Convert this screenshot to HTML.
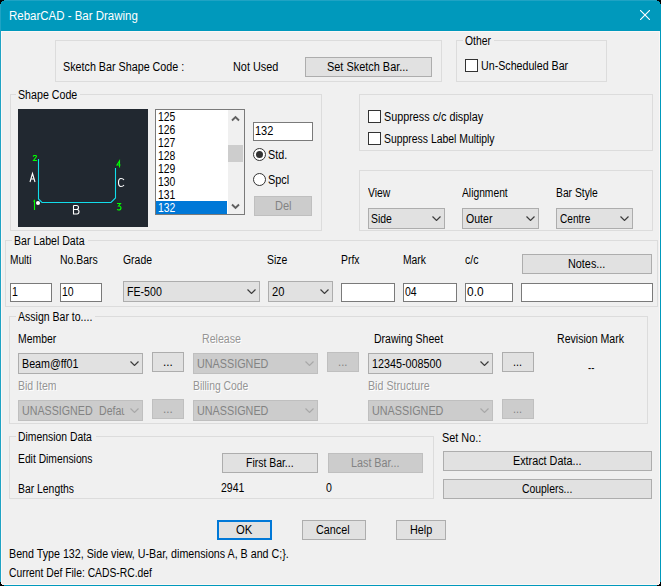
<!DOCTYPE html><html><head><meta charset="utf-8"><style>
html,body{margin:0;padding:0;width:661px;height:586px;overflow:hidden;background:#f0f0f0}
body{position:relative;font-family:"Liberation Sans",sans-serif}
.t{position:absolute;line-height:12px;white-space:pre;transform-origin:0 50%}
</style></head><body>
<div style="position:absolute;left:0px;top:0px;width:661px;height:586px;background:#000;"></div>
<div style="position:absolute;left:0px;top:0px;width:661px;height:586px;background:#0099bc;border-top:1px solid #1fa3c4;border-left:1px solid #1fa3c4;box-sizing:border-box;"></div>
<div style="position:absolute;left:1px;top:31px;width:659px;height:554px;background:#fcf7f6;"></div>
<div style="position:absolute;left:2px;top:32px;width:657px;height:552px;background:#f0f0f0;"></div>
<div style="position:absolute;left:0px;top:0px;width:4px;height:1px;background:#000;"></div>
<div style="position:absolute;left:0px;top:1px;width:2px;height:1px;background:#000;"></div>
<div style="position:absolute;left:0px;top:2px;width:1px;height:2px;background:#000;"></div>
<div style="position:absolute;left:657px;top:0px;width:4px;height:1px;background:#000;"></div>
<div style="position:absolute;left:659px;top:1px;width:2px;height:1px;background:#000;"></div>
<div style="position:absolute;left:660px;top:2px;width:1px;height:2px;background:#000;"></div>
<div style="position:absolute;left:0px;top:585px;width:4px;height:1px;background:#000;"></div>
<div style="position:absolute;left:0px;top:584px;width:2px;height:1px;background:#000;"></div>
<div style="position:absolute;left:0px;top:582px;width:1px;height:2px;background:#000;"></div>
<div style="position:absolute;left:657px;top:585px;width:4px;height:1px;background:#000;"></div>
<div style="position:absolute;left:659px;top:584px;width:2px;height:1px;background:#000;"></div>
<div style="position:absolute;left:660px;top:582px;width:1px;height:2px;background:#000;"></div>
<div class="t" style="left:9.34px;top:10px;color:#fff;font-size:12px;transform:scaleX(0.9564)">RebarCAD - Bar Drawing</div>
<svg style="position:absolute;left:640px;top:10px" width="10" height="10" viewBox="0 0 10 10"><path d="M0,0 L10,10 M10,0 L0,10" stroke="#fff" stroke-width="1.1"/></svg>
<div style="position:absolute;left:55px;top:40px;width:387px;height:42px;background:transparent;border:1px solid #dcdcdc;box-sizing:border-box;"></div>
<div class="t" style="left:63.40px;top:61px;color:#000;font-size:12px;transform:scaleX(0.8955)">Sketch Bar Shape Code :</div>
<div class="t" style="left:233.39px;top:61px;color:#000;font-size:12px;transform:scaleX(0.9083)">Not Used</div>
<div style="position:absolute;left:305px;top:57px;width:127px;height:20px;background:#e1e1e1;border:1px solid #adadad;box-sizing:border-box;"></div>
<div class="t" style="left:327.29px;top:61px;color:#000;font-size:12px;transform:scaleX(0.9102)">Set Sketch Bar...</div>
<div style="position:absolute;left:456px;top:40px;width:151px;height:42px;background:transparent;border:1px solid #dcdcdc;box-sizing:border-box;"></div>
<div style="position:absolute;left:463px;top:40px;width:31px;height:1px;background:#f0f0f0;"></div>
<div class="t" style="left:464.70px;top:35px;color:#000;font-size:12px;transform:scaleX(0.8633)">Other</div>
<div style="position:absolute;left:465px;top:59px;width:13px;height:13px;background:#fff;border:1px solid #333;box-sizing:border-box;"></div>
<div class="t" style="left:480.91px;top:60px;color:#000;font-size:12px;transform:scaleX(0.8887)">Un-Scheduled Bar</div>
<div style="position:absolute;left:10px;top:94px;width:312px;height:137px;background:transparent;border:1px solid #dcdcdc;box-sizing:border-box;"></div>
<div style="position:absolute;left:16px;top:94px;width:64px;height:1px;background:#f0f0f0;"></div>
<div class="t" style="left:17.71px;top:89px;color:#000;font-size:12px;transform:scaleX(0.8877)">Shape Code</div>
<svg style="position:absolute;left:18px;top:109px" width="130" height="118" viewBox="0 0 130 118">
<rect x="0" y="0" width="130" height="118" fill="#212830"/>
<path d="M20.5,50 L20.5,90 L24,93.5 L93,93.5 L97.5,89 L97.5,59" fill="none" stroke="#12dcea" stroke-width="1.1"/>
<g fill="none" stroke="#00ff00" stroke-width="1.1">
<path d="M15,47.5 L16,46.5 L18,46.5 L18.5,47.5 L15.5,51.5 L19,51.5"/>
<path d="M15.5,92.5 L16.5,91.5 L16.5,101"/>
<path d="M101.5,58.5 L101.5,52 L99,56 L102.5,56"/>
<path d="M99,94.5 L102.5,94.5 L100.5,97 Q103,97 103,99 Q103,101 100.5,101 L99,100.5"/>
</g>
<g fill="none" stroke="#ffffff" stroke-width="1.1">
<path d="M12,73 L14.5,64.5 L17,73 M13,70 L16,70"/>
<path d="M106,71 Q105,69.5 103,69.5 Q100.5,69.5 100.5,73.5 Q100.5,77.5 103,77.5 Q105,77.5 106,76"/>
<path d="M55.5,96.5 L55.5,105 L59,105 Q61,105 61,102.5 Q61,100.5 58.5,100.5 L55.5,100.5 M58.5,100.5 Q60.5,100.5 60.5,98.5 Q60.5,96.5 58.5,96.5 L55.5,96.5"/>
</g>
<circle cx="20" cy="94" r="2" fill="#fff"/>
</svg>
<div style="position:absolute;left:155px;top:109px;width:90px;height:106px;background:#fff;border:1px solid #7a7a7a;box-sizing:border-box;"></div>
<div style="position:absolute;left:228px;top:110px;width:16px;height:104px;background:#f0f0f0;"></div>
<div style="position:absolute;left:228px;top:145px;width:15px;height:17px;background:#cdcdcd;"></div>
<svg style="position:absolute;left:231px;top:115px" width="9" height="7" viewBox="0 0 9 7"><polyline points="1,5.5 4.5,2 8,5.5" fill="none" stroke="#606060" stroke-width="1.9"/></svg>
<svg style="position:absolute;left:231px;top:203px" width="9" height="7" viewBox="0 0 9 7"><polyline points="1,1.5 4.5,5 8,1.5" fill="none" stroke="#606060" stroke-width="1.9"/></svg>
<div style="position:absolute;left:156px;top:201px;width:71px;height:13px;background:#0078d7;"></div>
<div class="t" style="left:158.14px;top:111px;color:#000;font-size:12px;transform:scaleX(0.8632)">125</div>
<div class="t" style="left:158.14px;top:124px;color:#000;font-size:12px;transform:scaleX(0.8632)">126</div>
<div class="t" style="left:158.14px;top:137px;color:#000;font-size:12px;transform:scaleX(0.8632)">127</div>
<div class="t" style="left:158.14px;top:150px;color:#000;font-size:12px;transform:scaleX(0.8632)">128</div>
<div class="t" style="left:158.14px;top:163px;color:#000;font-size:12px;transform:scaleX(0.8632)">129</div>
<div class="t" style="left:158.14px;top:176px;color:#000;font-size:12px;transform:scaleX(0.8632)">130</div>
<div class="t" style="left:158.14px;top:189px;color:#000;font-size:12px;transform:scaleX(0.8632)">131</div>
<div class="t" style="left:158.14px;top:202px;color:#fff;font-size:12px;transform:scaleX(0.8632)">132</div>
<div style="position:absolute;left:253px;top:122px;width:60px;height:19px;background:#fff;border:1px solid #7a7a7a;box-sizing:border-box;"></div>
<div class="t" style="left:254.68px;top:125px;color:#000;font-size:12px;transform:scaleX(0.9158)">132</div>
<svg style="position:absolute;left:253px;top:148px" width="13" height="13" viewBox="0 0 13 13"><circle cx="6.5" cy="6.5" r="6" fill="#fff" stroke="#333" stroke-width="1"/><circle cx="6.5" cy="6.5" r="3.5" fill="#333"/></svg>
<div class="t" style="left:268.30px;top:149px;color:#000;font-size:12px;transform:scaleX(0.9000)">Std.</div>
<svg style="position:absolute;left:253px;top:173px" width="13" height="13" viewBox="0 0 13 13"><circle cx="6.5" cy="6.5" r="6" fill="#fff" stroke="#333" stroke-width="1"/></svg>
<div class="t" style="left:268.29px;top:174px;color:#000;font-size:12px;transform:scaleX(0.9091)">Spcl</div>
<div style="position:absolute;left:254px;top:196px;width:58px;height:20px;background:#cccccc;border:1px solid #bfbfbf;box-sizing:border-box;"></div>
<div class="t" style="left:274.78px;top:200px;color:#838383;font-size:12px;transform:scaleX(0.9187)">Del</div>
<div style="position:absolute;left:359px;top:94px;width:294px;height:57px;background:transparent;border:1px solid #dcdcdc;box-sizing:border-box;"></div>
<div style="position:absolute;left:368px;top:110px;width:13px;height:13px;background:#fff;border:1px solid #333;box-sizing:border-box;"></div>
<div class="t" style="left:383.60px;top:111px;color:#000;font-size:12px;transform:scaleX(0.9000)">Suppress c/c display</div>
<div style="position:absolute;left:368px;top:132px;width:13px;height:13px;background:#fff;border:1px solid #333;box-sizing:border-box;"></div>
<div class="t" style="left:383.63px;top:133px;color:#000;font-size:12px;transform:scaleX(0.8677)">Suppress Label Multiply</div>
<div style="position:absolute;left:359px;top:170px;width:294px;height:61px;background:transparent;border:1px solid #dcdcdc;box-sizing:border-box;"></div>
<div class="t" style="left:368.00px;top:187px;color:#000;font-size:12px;transform:scaleX(0.8654)">View</div>
<div class="t" style="left:461.80px;top:187px;color:#000;font-size:12px;transform:scaleX(0.8566)">Alignment</div>
<div class="t" style="left:555.94px;top:187px;color:#000;font-size:12px;transform:scaleX(0.8596)">Bar Style</div>
<div style="position:absolute;left:368px;top:208px;width:77px;height:21px;background:#e1e1e1;border:1px solid #adadad;box-sizing:border-box;"></div>
<div class="t" style="left:371.13px;top:213px;color:#000;font-size:12px;transform:scaleX(0.8696)">Side</div>
<svg style="position:absolute;left:432px;top:216px" width="9" height="5" viewBox="0 0 9 5"><polyline points="0.5,0.5 4.5,4.5 8.5,0.5" fill="none" stroke="#3c3c3c" stroke-width="1.15"/></svg>
<div style="position:absolute;left:462px;top:208px;width:77px;height:21px;background:#e1e1e1;border:1px solid #adadad;box-sizing:border-box;"></div>
<div class="t" style="left:466.00px;top:213px;color:#000;font-size:12px;transform:scaleX(0.8800)">Outer</div>
<svg style="position:absolute;left:526px;top:216px" width="9" height="5" viewBox="0 0 9 5"><polyline points="0.5,0.5 4.5,4.5 8.5,0.5" fill="none" stroke="#3c3c3c" stroke-width="1.15"/></svg>
<div style="position:absolute;left:556px;top:208px;width:77px;height:21px;background:#e1e1e1;border:1px solid #adadad;box-sizing:border-box;"></div>
<div class="t" style="left:559.60px;top:213px;color:#000;font-size:12px;transform:scaleX(0.8417)">Centre</div>
<svg style="position:absolute;left:620px;top:216px" width="9" height="5" viewBox="0 0 9 5"><polyline points="0.5,0.5 4.5,4.5 8.5,0.5" fill="none" stroke="#3c3c3c" stroke-width="1.15"/></svg>
<div style="position:absolute;left:5px;top:240px;width:653px;height:67px;background:transparent;border:1px solid #dcdcdc;box-sizing:border-box;"></div>
<div style="position:absolute;left:12px;top:240px;width:76px;height:1px;background:#f0f0f0;"></div>
<div class="t" style="left:13.62px;top:235px;color:#000;font-size:12px;transform:scaleX(0.8810)">Bar Label Data</div>
<div class="t" style="left:10.05px;top:254px;color:#000;font-size:12px;transform:scaleX(0.8458)">Multi</div>
<div class="t" style="left:59.63px;top:254px;color:#000;font-size:12px;transform:scaleX(0.8714)">No.Bars</div>
<div class="t" style="left:122.50px;top:254px;color:#000;font-size:12px;transform:scaleX(0.8697)">Grade</div>
<div class="t" style="left:267.13px;top:254px;color:#000;font-size:12px;transform:scaleX(0.8682)">Size</div>
<div class="t" style="left:340.63px;top:254px;color:#000;font-size:12px;transform:scaleX(0.8650)">Prfx</div>
<div class="t" style="left:402.54px;top:254px;color:#000;font-size:12px;transform:scaleX(0.8615)">Mark</div>
<div class="t" style="left:464.80px;top:254px;color:#000;font-size:12px;transform:scaleX(0.8800)">c/c</div>
<div style="position:absolute;left:10px;top:283px;width:42px;height:19px;background:#fff;border:1px solid #7a7a7a;box-sizing:border-box;"></div>
<div class="t" style="left:11.82px;top:286px;color:#000;font-size:12px;transform:scaleX(0.8800)">1</div>
<div style="position:absolute;left:60px;top:283px;width:42px;height:19px;background:#fff;border:1px solid #7a7a7a;box-sizing:border-box;"></div>
<div class="t" style="left:62.12px;top:286px;color:#000;font-size:12px;transform:scaleX(0.8750)">10</div>
<div style="position:absolute;left:123px;top:281px;width:137px;height:21px;background:#e1e1e1;border:1px solid #adadad;box-sizing:border-box;"></div>
<div class="t" style="left:126.62px;top:286px;color:#000;font-size:12px;transform:scaleX(0.8842)">FE-500</div>
<svg style="position:absolute;left:247px;top:289px" width="9" height="5" viewBox="0 0 9 5"><polyline points="0.5,0.5 4.5,4.5 8.5,0.5" fill="none" stroke="#3c3c3c" stroke-width="1.15"/></svg>
<div style="position:absolute;left:268px;top:281px;width:65px;height:21px;background:#e1e1e1;border:1px solid #adadad;box-sizing:border-box;"></div>
<div class="t" style="left:272.10px;top:286px;color:#000;font-size:12px;transform:scaleX(0.9308)">20</div>
<svg style="position:absolute;left:320px;top:289px" width="9" height="5" viewBox="0 0 9 5"><polyline points="0.5,0.5 4.5,4.5 8.5,0.5" fill="none" stroke="#3c3c3c" stroke-width="1.15"/></svg>
<div style="position:absolute;left:341px;top:283px;width:54px;height:19px;background:#fff;border:1px solid #7a7a7a;box-sizing:border-box;"></div>
<div style="position:absolute;left:403px;top:283px;width:54px;height:19px;background:#fff;border:1px solid #7a7a7a;box-sizing:border-box;"></div>
<div class="t" style="left:405.40px;top:286px;color:#000;font-size:12px;transform:scaleX(0.8769)">04</div>
<div style="position:absolute;left:465px;top:283px;width:48px;height:19px;background:#fff;border:1px solid #7a7a7a;box-sizing:border-box;"></div>
<div class="t" style="left:466.50px;top:286px;color:#000;font-size:12px;transform:scaleX(0.9937)">0.0</div>
<div style="position:absolute;left:521px;top:283px;width:132px;height:19px;background:#fff;border:1px solid #7a7a7a;box-sizing:border-box;"></div>
<div style="position:absolute;left:522px;top:254px;width:130px;height:20px;background:#e1e1e1;border:1px solid #adadad;box-sizing:border-box;"></div>
<div class="t" style="left:567.50px;top:258px;color:#000;font-size:12px;transform:scaleX(0.9025)">Notes...</div>
<div style="position:absolute;left:9px;top:316px;width:639px;height:108px;background:transparent;border:1px solid #dcdcdc;box-sizing:border-box;"></div>
<div style="position:absolute;left:16px;top:316px;width:79px;height:1px;background:#f0f0f0;"></div>
<div class="t" style="left:18.00px;top:311px;color:#000;font-size:12px;transform:scaleX(0.8774)">Assign Bar to....</div>
<div class="t" style="left:17.63px;top:333px;color:#000;font-size:12px;transform:scaleX(0.8674)">Member</div>
<div class="t" style="left:202.81px;top:334px;color:#fff;font-size:12px;transform:scaleX(0.8860)">Release</div>
<div class="t" style="left:201.81px;top:333px;color:#959595;font-size:12px;transform:scaleX(0.8860)">Release</div>
<div class="t" style="left:373.62px;top:333px;color:#000;font-size:12px;transform:scaleX(0.8782)">Drawing Sheet</div>
<div class="t" style="left:556.92px;top:333px;color:#000;font-size:12px;transform:scaleX(0.8813)">Revision Mark</div>
<div style="position:absolute;left:18px;top:353px;width:125px;height:21px;background:#e1e1e1;border:1px solid #adadad;box-sizing:border-box;"></div>
<div class="t" style="left:21.51px;top:358px;color:#000;font-size:12px;transform:scaleX(0.8903)">Beam@ff01</div>
<svg style="position:absolute;left:130px;top:361px" width="9" height="5" viewBox="0 0 9 5"><polyline points="0.5,0.5 4.5,4.5 8.5,0.5" fill="none" stroke="#3c3c3c" stroke-width="1.15"/></svg>
<div style="position:absolute;left:152px;top:352px;width:32px;height:20px;background:#e1e1e1;border:1px solid #adadad;box-sizing:border-box;"></div>
<div class="t" style="left:162.83px;top:356px;color:#000;font-size:12px;transform:scaleX(0.9750)">...</div>
<div style="position:absolute;left:193px;top:353px;width:125px;height:21px;background:#cccccc;border:1px solid #bfbfbf;box-sizing:border-box;"></div>
<div class="t" style="left:196.60px;top:358px;color:#838383;font-size:12px;transform:scaleX(0.9000)">UNASSIGNED</div>
<svg style="position:absolute;left:305px;top:361px" width="9" height="5" viewBox="0 0 9 5"><polyline points="0.5,0.5 4.5,4.5 8.5,0.5" fill="none" stroke="#a8a8a8" stroke-width="1.15"/></svg>
<div style="position:absolute;left:327px;top:352px;width:32px;height:20px;background:#cccccc;border:1px solid #bfbfbf;box-sizing:border-box;"></div>
<div class="t" style="left:337.56px;top:356px;color:#838383;font-size:12px;transform:scaleX(0.9375)">...</div>
<div style="position:absolute;left:368px;top:353px;width:125px;height:21px;background:#e1e1e1;border:1px solid #adadad;box-sizing:border-box;"></div>
<div class="t" style="left:371.90px;top:358px;color:#000;font-size:12px;transform:scaleX(0.8974)">12345-008500</div>
<svg style="position:absolute;left:480px;top:361px" width="9" height="5" viewBox="0 0 9 5"><polyline points="0.5,0.5 4.5,4.5 8.5,0.5" fill="none" stroke="#3c3c3c" stroke-width="1.15"/></svg>
<div style="position:absolute;left:502px;top:352px;width:32px;height:20px;background:#e1e1e1;border:1px solid #adadad;box-sizing:border-box;"></div>
<div class="t" style="left:513.00px;top:356px;color:#000;font-size:12px;transform:scaleX(0.9000)">...</div>
<div class="t" style="left:587.90px;top:362px;color:#000;font-size:12px;transform:scaleX(0.7875)">--</div>
<div class="t" style="left:18.63px;top:381px;color:#fff;font-size:12px;transform:scaleX(0.8744)">Bid Item</div>
<div class="t" style="left:17.63px;top:380px;color:#959595;font-size:12px;transform:scaleX(0.8744)">Bid Item</div>
<div class="t" style="left:193.73px;top:381px;color:#fff;font-size:12px;transform:scaleX(0.8651)">Billing Code</div>
<div class="t" style="left:192.73px;top:380px;color:#959595;font-size:12px;transform:scaleX(0.8651)">Billing Code</div>
<div class="t" style="left:368.61px;top:381px;color:#fff;font-size:12px;transform:scaleX(0.8897)">Bid Structure</div>
<div class="t" style="left:367.61px;top:380px;color:#959595;font-size:12px;transform:scaleX(0.8897)">Bid Structure</div>
<div style="position:absolute;left:18px;top:400px;width:125px;height:21px;background:#cccccc;border:1px solid #bfbfbf;box-sizing:border-box;"></div>
<div class="t" style="left:21.51px;top:405px;color:#838383;font-size:12px;transform:scaleX(0.8910)">UNASSIGNED</div>
<svg style="position:absolute;left:130px;top:408px" width="9" height="5" viewBox="0 0 9 5"><polyline points="0.5,0.5 4.5,4.5 8.5,0.5" fill="none" stroke="#a8a8a8" stroke-width="1.15"/></svg>
<div class="t" style="left:98.82px;top:405px;color:#838383;font-size:12px;transform:scaleX(0.8800);width:28.6px;overflow:hidden">Default</div>
<div style="position:absolute;left:152px;top:399px;width:32px;height:20px;background:#cccccc;border:1px solid #bfbfbf;box-sizing:border-box;"></div>
<div class="t" style="left:162.83px;top:403px;color:#838383;font-size:12px;transform:scaleX(0.9750)">...</div>
<div style="position:absolute;left:193px;top:400px;width:125px;height:21px;background:#cccccc;border:1px solid #bfbfbf;box-sizing:border-box;"></div>
<div class="t" style="left:196.60px;top:405px;color:#838383;font-size:12px;transform:scaleX(0.9000)">UNASSIGNED</div>
<svg style="position:absolute;left:305px;top:408px" width="9" height="5" viewBox="0 0 9 5"><polyline points="0.5,0.5 4.5,4.5 8.5,0.5" fill="none" stroke="#a8a8a8" stroke-width="1.15"/></svg>
<div style="position:absolute;left:368px;top:400px;width:125px;height:21px;background:#cccccc;border:1px solid #bfbfbf;box-sizing:border-box;"></div>
<div class="t" style="left:371.90px;top:405px;color:#838383;font-size:12px;transform:scaleX(0.9000)">UNASSIGNED</div>
<svg style="position:absolute;left:480px;top:408px" width="9" height="5" viewBox="0 0 9 5"><polyline points="0.5,0.5 4.5,4.5 8.5,0.5" fill="none" stroke="#a8a8a8" stroke-width="1.15"/></svg>
<div style="position:absolute;left:502px;top:399px;width:32px;height:20px;background:#cccccc;border:1px solid #bfbfbf;box-sizing:border-box;"></div>
<div class="t" style="left:513.00px;top:403px;color:#838383;font-size:12px;transform:scaleX(0.9000)">...</div>
<div style="position:absolute;left:9px;top:436px;width:425px;height:63px;background:transparent;border:1px solid #dcdcdc;box-sizing:border-box;"></div>
<div style="position:absolute;left:16px;top:436px;width:80px;height:1px;background:#f0f0f0;"></div>
<div class="t" style="left:17.64px;top:431px;color:#000;font-size:12px;transform:scaleX(0.8647)">Dimension Data</div>
<div class="t" style="left:17.64px;top:453px;color:#000;font-size:12px;transform:scaleX(0.8593)">Edit Dimensions</div>
<div class="t" style="left:17.63px;top:483px;color:#000;font-size:12px;transform:scaleX(0.8656)">Bar Lengths</div>
<div style="position:absolute;left:222px;top:453px;width:96px;height:20px;background:#e1e1e1;border:1px solid #adadad;box-sizing:border-box;"></div>
<div class="t" style="left:245.53px;top:457px;color:#000;font-size:12px;transform:scaleX(0.8698)">First Bar...</div>
<div style="position:absolute;left:328px;top:453px;width:95px;height:20px;background:#cccccc;border:1px solid #bfbfbf;box-sizing:border-box;"></div>
<div class="t" style="left:350.90px;top:457px;color:#838383;font-size:12px;transform:scaleX(0.8981)">Last Bar...</div>
<div class="t" style="left:220.70px;top:482px;color:#000;font-size:12px;transform:scaleX(0.8731)">2941</div>
<div class="t" style="left:326.00px;top:482px;color:#000;font-size:12px;transform:scaleX(0.8800)">0</div>
<div class="t" style="left:441.80px;top:432px;color:#000;font-size:12px;transform:scaleX(0.9048)">Set No.:</div>
<div style="position:absolute;left:443px;top:451px;width:209px;height:20px;background:#e1e1e1;border:1px solid #adadad;box-sizing:border-box;"></div>
<div class="t" style="left:512.70px;top:455px;color:#000;font-size:12px;transform:scaleX(0.9000)">Extract Data...</div>
<div style="position:absolute;left:443px;top:479px;width:209px;height:20px;background:#e1e1e1;border:1px solid #adadad;box-sizing:border-box;"></div>
<div class="t" style="left:521.80px;top:483px;color:#000;font-size:12px;transform:scaleX(0.8667)">Couplers...</div>
<div style="position:absolute;left:217px;top:520px;width:55px;height:20px;background:#e1e1e1;border:1px solid #0078d7;box-sizing:border-box;border-width:2px;"></div>
<div class="t" style="left:236.40px;top:524px;color:#000;font-size:12px;transform:scaleX(0.9412)">OK</div>
<div style="position:absolute;left:302px;top:520px;width:64px;height:20px;background:#e1e1e1;border:1px solid #adadad;box-sizing:border-box;"></div>
<div class="t" style="left:316.30px;top:524px;color:#000;font-size:12px;transform:scaleX(0.8973)">Cancel</div>
<div style="position:absolute;left:396px;top:520px;width:50px;height:20px;background:#e1e1e1;border:1px solid #adadad;box-sizing:border-box;"></div>
<div class="t" style="left:409.60px;top:524px;color:#000;font-size:12px;transform:scaleX(0.9000)">Help</div>
<div class="t" style="left:8.51px;top:548px;color:#000;font-size:12px;transform:scaleX(0.8910)">Bend Type 132, Side view, U-Bar, dimensions A, B and C;}.</div>
<div class="t" style="left:9.00px;top:567px;color:#000;font-size:12px;transform:scaleX(0.8608)">Current Def File: CADS-RC.def</div>
</body></html>
